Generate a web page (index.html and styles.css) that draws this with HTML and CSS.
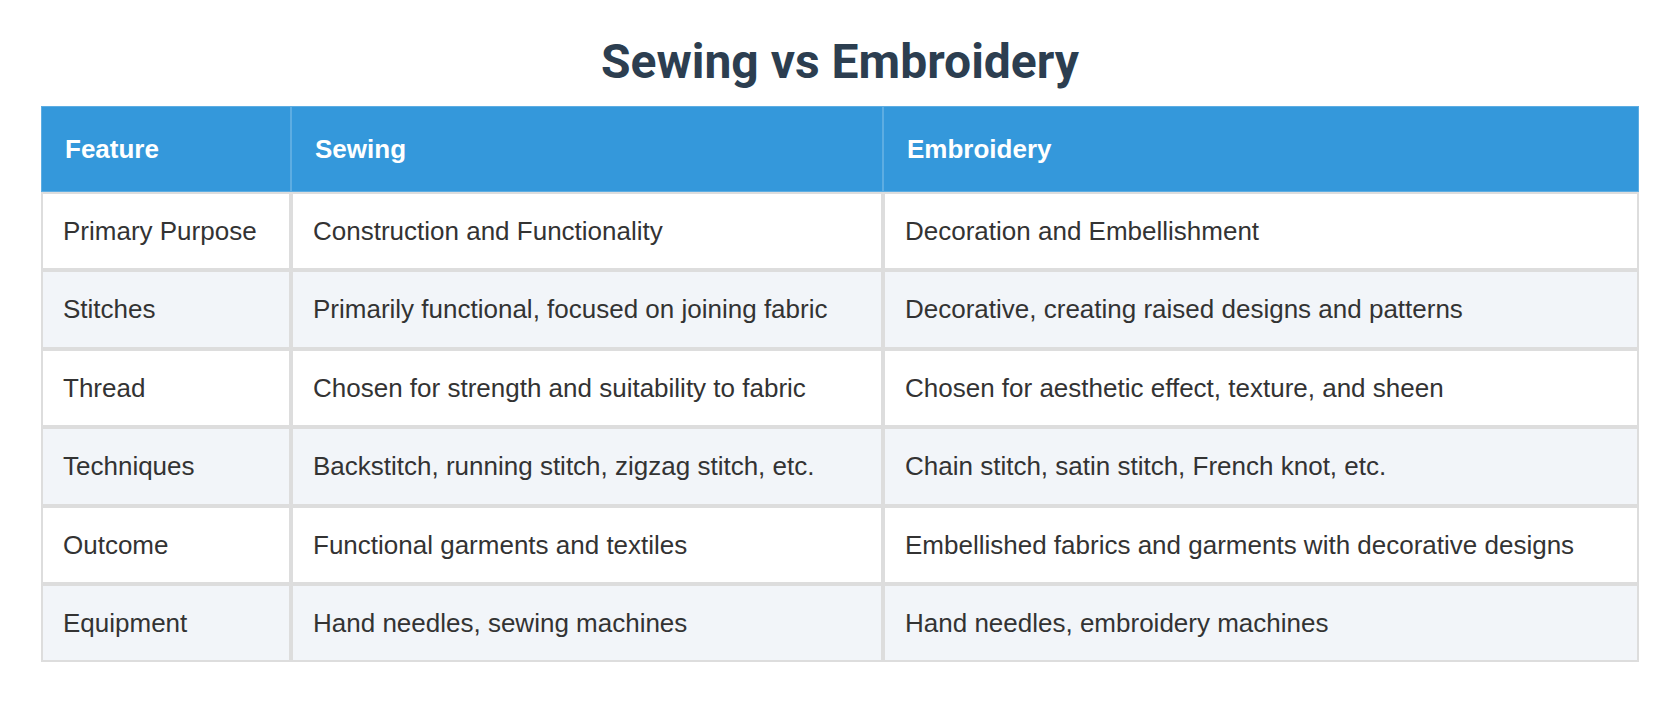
FILE: index.html
```html
<!DOCTYPE html>
<html lang="en">
<head>
<meta charset="utf-8">
<title>Sewing vs Embroidery</title>
<link rel="stylesheet" href="styles.css">
</head>
<body>
<div class="page">
  <h1 class="title">Sewing vs Embroidery</h1>
  <table class="compare">
    <colgroup>
      <col class="col-feature">
      <col class="col-sewing">
      <col class="col-embroidery">
    </colgroup>
    <thead>
      <tr>
        <th>Feature</th>
        <th>Sewing</th>
        <th>Embroidery</th>
      </tr>
    </thead>
    <tbody>
      <tr>
        <td>Primary Purpose</td>
        <td>Construction and Functionality</td>
        <td>Decoration and Embellishment</td>
      </tr>
      <tr>
        <td>Stitches</td>
        <td>Primarily functional, focused on joining fabric</td>
        <td>Decorative, creating raised designs and patterns</td>
      </tr>
      <tr>
        <td>Thread</td>
        <td>Chosen for strength and suitability to fabric</td>
        <td>Chosen for aesthetic effect, texture, and sheen</td>
      </tr>
      <tr>
        <td>Techniques</td>
        <td>Backstitch, running stitch, zigzag stitch, etc.</td>
        <td>Chain stitch, satin stitch, French knot, etc.</td>
      </tr>
      <tr>
        <td>Outcome</td>
        <td>Functional garments and textiles</td>
        <td>Embellished fabrics and garments with decorative designs</td>
      </tr>
      <tr>
        <td>Equipment</td>
        <td>Hand needles, sewing machines</td>
        <td>Hand needles, embroidery machines</td>
      </tr>
    </tbody>
  </table>
</div>
</body>
</html>
```
FILE: styles.css
```css
html, body {
  margin: 0;
  padding: 0;
  background: #ffffff;
}

.page {
  padding: 0 41px;
  font-family: "Liberation Sans", Arial, sans-serif;
  color: #333333;
}

.title {
  margin: 34px 0 16px;
  font-family: Roboto, "Liberation Sans", sans-serif;
  font-weight: 700;
  font-size: 48px;
  line-height: 56px;
  color: #2c3e50;
  text-align: center;
}

.compare {
  width: 100%;
  table-layout: fixed;
  border-collapse: separate;
  border-spacing: 0;
  font-size: 26px;
}

.col-feature { width: 250px; }
.col-sewing { width: 592px; }
.col-embroidery { width: 756px; }

.compare th {
  background: #3498db;
  color: #ffffff;
  font-weight: 700;
  text-align: left;
  padding: 20px 23px;
  line-height: 44px;
  border: 1px solid #5dade2;
}

.compare td {
  padding: 20px;
  line-height: 34.4px;
  border: 2px solid #dddddd;
  background: #ffffff;
}

.compare tbody tr:nth-child(even) td {
  background: #f2f5f9;
}
```
